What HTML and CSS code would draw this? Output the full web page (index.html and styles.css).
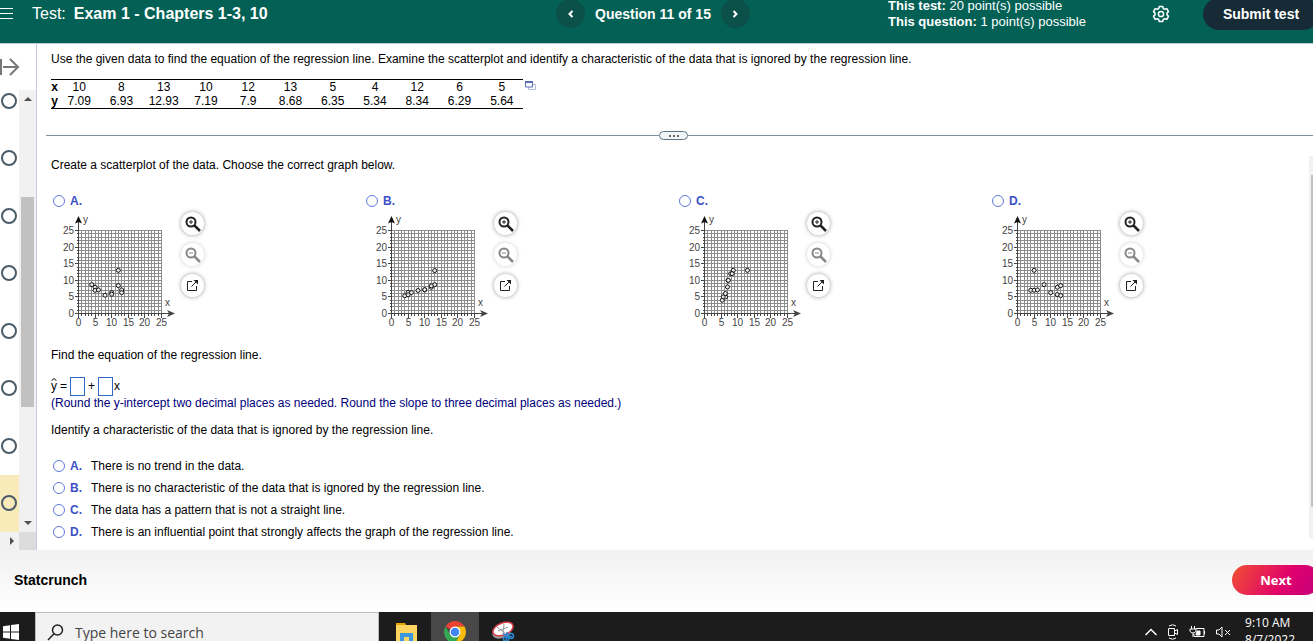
FILE: index.html
```html
<!DOCTYPE html>
<html lang="en">
  <head>
    <meta charset="UTF-8" />
    <meta name="viewport" content="width=device-width, initial-scale=1.0" />
    <title>Exam 1 - Chapters 1-3, 10</title>
    <link rel="stylesheet" href="styles.css">
  </head>

  <body>
    <header class="topbar">
      <div class="test-title">
        <button class="menu" aria-label="Menu"><span></span><span></span><span></span></button>
        <span>Test:</span>
        <b>Exam 1 - Chapters 1-3, 10</b>
      </div>
      <div class="question-nav">
        <button class="round" aria-label="Previous question">
          <svg width="6" height="8" viewBox="0 0 6 8"><path d="M4.5 1 L1.5 4 L4.5 7" /></svg>
        </button>
        <b>Question 11 of 15</b>
        <button class="round" aria-label="Next question">
          <svg width="6" height="8" viewBox="0 0 6 8"><path d="M1.5 1 L4.5 4 L1.5 7" /></svg>
        </button>
      </div>
      <div class="points">
        <div><b>This test:</b> 20 point(s) possible</div>
        <div><b>This question:</b> 1 point(s) possible</div>
      </div>
      <div class="actions">
        <button class="gear" aria-label="Settings">
          <svg width="18" height="18" viewBox="0 0 18 18">
            <path d="M7.3 1.5h3.4l.6 2 1.4.8 2.1-.7 1.7 3-1.5 1.5v1.8l1.5 1.5-1.7 3-2.1-.7-1.4.8-.6 2H7.3l-.6-2-1.4-.8-2.1.7-1.7-3L3 9.900V8.100L1.500 6.600l1.700-3 2.100.7 1.400-.8z" />
            <circle cx="9" cy="9" r="2.600" />
          </svg>
        </button>
        <button class="submit">Submit test</button>
      </div>
    </header>

    <div class="main">
      <aside class="sidebar">
        <button class="expand" aria-label="Expand question list">
          <svg width="20" height="20" viewBox="0 0 20 20"><path d="M1 2V18M3 10H18M10 2L18 10L10 18" /></svg>
        </button>
        <div class="side-scroll">
          <nav class="question-list">
            <div class="questions">
              <a href="#q4" aria-label="Question 4"></a>
              <a href="#q5" aria-label="Question 5"></a>
              <a href="#q6" aria-label="Question 6"></a>
              <a href="#q7" aria-label="Question 7"></a>
              <a href="#q8" aria-label="Question 8"></a>
              <a href="#q9" aria-label="Question 9"></a>
              <a href="#q10" aria-label="Question 10"></a>
              <a href="#q11" aria-label="Question 11" class="current"></a>
            </div>
          </nav>
          <div class="vbar">
            <i class="up"></i>
            <div class="thumb"></div>
            <i class="down"></i>
          </div>
        </div>
        <div class="hbar"><i class="right"></i><div class="corner"></div></div>
      </aside>

      <main class="content">
        <p>Use the given data to find the equation of the regression line. Examine the scatterplot and identify a characteristic of the data that is ignored by the regression line.</p>
        <div class="data">
          <table>
            <tr><th scope="row">x</th><td>10</td><td>8</td><td>13</td><td>10</td><td>12</td><td>13</td><td>5</td><td>4</td><td>12</td><td>6</td><td>5</td></tr>
            <tr><th scope="row">y</th><td>7.09</td><td>6.93</td><td>12.93</td><td>7.19</td><td>7.9</td><td>8.68</td><td>6.35</td><td>5.34</td><td>8.34</td><td>6.29</td><td>5.64</td></tr>
          </table>
          <button class="copy" aria-label="Open data">
            <svg width="11" height="10" viewBox="0 0 11 10">
              <path d="M3.500 3.500h7v5h-7z" fill="#fff" stroke="#b4bce0" />
              <path d="M.5 1h7v5h-7z" fill="#fff" stroke="#5b6bb5" />
              <path d="M0 1h8" stroke="#5b6bb5" stroke-width="2" />
            </svg>
          </button>
        </div>

        <div class="divider"><button aria-label="Resize"><span></span><span></span><span></span></button></div>

        <div class="answer">
          <p>Create a scatterplot of the data. Choose the correct graph below.</p>
          <div class="graphs" id="graphs"></div>

          <p>Find the equation of the regression line.</p>
          <div class="equation">
            <span class="hat"><svg width="6" height="3" viewBox="0 0 6 3"><path d="M.5 2.800L3 .5L5.500 2.800" /></svg>y</span>
            <span>=</span>
            <input type="text" aria-label="Intercept">
            <span>+</span>
            <input type="text" aria-label="Slope"><span>x</span>
          </div>
          <p class="hint">(Round the y-intercept two decimal places as needed. Round the slope to three decimal places as needed.)</p>
          <p class="identify">Identify a characteristic of the data that is ignored by the regression line.</p>

          <div class="choices">
            <label><input type="radio" name="trait"><b>A.</b>There is no trend in the data.</label>
            <label><input type="radio" name="trait"><b>B.</b>There is no characteristic of the data that is ignored by the regression line.</label>
            <label><input type="radio" name="trait"><b>C.</b>The data has a pattern that is not a straight line.</label>
            <label><input type="radio" name="trait"><b>D.</b>There is an influential point that strongly affects the graph of the regression line.</label>
          </div>
        </div>
        <div class="page-scroll"><div></div></div>
      </main>
    </div>

    <footer class="footer">
      <a href="#statcrunch">Statcrunch</a>
      <button class="next">Next</button>
    </footer>

    <div class="taskbar">
      <div class="taskbar-inner">
        <button class="start" aria-label="Start">
          <svg width="16" height="16" viewBox="0 0 16 16"><path d="M0 2.200L7 1.200V7.500H0zM8 1L16 0V7.500H8zM0 8.500H7V14.800L0 13.800zM8 8.500H16V16L8 15z" fill="#fff" /></svg>
        </button>
        <label class="search">
          <svg width="17" height="17" viewBox="0 0 17 17"><circle cx="10.500" cy="6" r="5" /><path d="M7 9.800L1 16" /></svg>
          <input type="text" placeholder="Type here to search" aria-label="Search">
        </label>
        <button class="app" aria-label="File Explorer">
          <svg width="22" height="20" viewBox="0 0 22 20">
            <path d="M0 1h9l1 2H0z" fill="#e8a400" /><path d="M0 3h21v17H0z" fill="#fcd462" />
            <path d="M4 20v-9h13v9h-4v-5H8v5z" fill="#3a96dd" />
          </svg>
        </button>
        <button class="app active" aria-label="Chrome">
          <svg width="22" height="22" viewBox="0 0 22 22">
            <path d="M11 11L1.500 5.500A11 11 0 0 1 20.500 5.500H11z" fill="#ea4335" />
            <path d="M11 5.500H20.500A11 11 0 0 1 11 22L15.800 13.800z" fill="#fbbc05" />
            <path d="M1.500 5.500A11 11 0 0 0 11 22L15.800 13.800 6.200 13.800z" fill="#34a853" />
            <circle cx="11" cy="11" r="5.500" fill="#fff" /><circle cx="11" cy="11" r="4.300" fill="#4285f4" />
          </svg>
        </button>
        <button class="app" aria-label="Snipping Tool">
          <svg width="24" height="22" viewBox="0 0 24 22">
            <ellipse cx="11" cy="11" rx="10" ry="6" transform="rotate(-22 11 11)" fill="#999" />
            <ellipse cx="12" cy="8" rx="10.500" ry="6" transform="rotate(-22 12 8)" fill="#fff" stroke="#d9404a" stroke-width="1.500" />
            <path d="M6 6L15 13M13 3L12 13M7 10L17 6" stroke="#999" fill="none" />
            <path d="M12 13L21 16M16 11L15 20" stroke="#2a8ad4" stroke-width="1.500" />
            <circle cx="20" cy="15" r="2.500" stroke="#2a8ad4" fill="none" stroke-width="1.500" />
            <circle cx="15" cy="18" r="2.500" stroke="#2a8ad4" fill="none" stroke-width="1.500" />
          </svg>
        </button>
        <div class="tray">
          <svg width="12" height="8" viewBox="0 0 12 8"><path d="M.5 7L6 1.500L11.500 7" stroke-width="1.500" /></svg>
          <svg width="12" height="16" viewBox="0 0 12 16"><path d="M1.500 4.500h6v7h-6zM7.500 7L10.500 5.500v5L7.500 9M2 2Q5.500 -.5 9 2M2 14Q5.500 16.500 9 14" /></svg>
          <svg width="17" height="12" viewBox="0 0 17 12"><path d="M7 2.500h8v8H5V8M15.500 5v3M2.500 0v3M5.500 0v3M1 3h6v2Q6.500 7 4 7Q1.500 7 1 5zM4 7v4" /><path d="M8 5h3v4H7z" fill="#fff" /></svg>
          <svg width="15" height="12" viewBox="0 0 15 12"><path d="M.5 4v4H3l3 3V1L3 4zM9 4l5 5M14 4L9 9" /></svg>
          <div class="clock"><div>9:10 AM</div><div>8/7/2022</div></div>
        </div>
      </div>
    </div>

    <script>
      const graphs = document.querySelector("#graphs");

      const plots = {
        A: [[4, 8.7], [5, 7.9], [5, 7], [6, 7.1], [8, 5.5], [10, 6.3], [10, 5.8], [12, 13], [12, 8.4], [13, 7.1], [13, 6.3]],
        B: [[10, 7.09], [8, 6.93], [13, 12.93], [10, 7.19], [12, 7.9], [13, 8.68], [5, 6.35], [4, 5.34], [12, 8.34], [6, 6.29], [5, 5.64]],
        C: [[7.09, 10], [6.93, 8], [12.93, 13], [7.19, 10], [7.9, 12], [8.68, 13], [6.35, 5], [5.34, 4], [8.34, 12], [6.29, 6], [5.64, 5]],
        D: [[5, 13], [4, 7], [5, 7], [6, 7.1], [8, 8.7], [10, 6.3], [12, 7.9], [12, 5.7], [13, 8.4], [13, 5.4]],
      };

      // origin of the axes and length of one unit
      const x0 = 27.5;
      const y0 = 99.5;
      const size = 83;
      const px = (v) => x0 + Math.round((v * size) / 25);
      const py = (v) => y0 - Math.round((v * size) / 25);

      const drawPlot = (points) => {
        let grid = "";
        let ticks = "";
        let labels = "";
        let dots = "";
        for (let i = 0; i <= 25; i++) {
          let t = i % 5 == 0 ? 4 : 2;
          grid += `M${px(i)} ${y0}V${y0 - size}M${x0} ${py(i)}H${x0 + size}`;
          ticks += `M${px(i)} ${y0}v${t}M${x0} ${py(i)}h-${t}`;
          if (i % 5 == 0) {
            labels += `<text x="${px(i)}" y="112" text-anchor="middle">${i}</text>`;
            labels += `<text x="23" y="${py(i) + 3}" text-anchor="end">${i}</text>`;
          }
        }
        for (let p of points) {
          dots += `<circle cx="${x0 + (p[0] * size) / 25}" cy="${y0 - (p[1] * size) / 25}" r="2" />`;
        }
        return `<svg class="plot" width="130" height="116" viewBox="0 0 130 116">
          <path class="grid" d="${grid}" />
          <path class="axis" d="${ticks}M${x0} ${y0}V6M${x0} ${y0}H118" />
          <path d="M27.500 2L24 9.500L27.500 8L31 9.500z" fill="#111" />
          <path d="M124 99.500L116 96L118 99.500L116 103z" fill="#444" />
          ${labels}
          <text x="32" y="9">y</text><text x="114" y="92">x</text>
          <g class="dots">${dots}</g>
        </svg>`;
      };

      const lens = (sign) =>
        `<svg width="16" height="16" viewBox="0 0 16 16"><circle cx="6" cy="6" r="4.500" stroke-width="2" /><path d="M9.500 9.500L15 15" stroke-width="2.500" /><path d="${sign}" /></svg>`;

      for (let name in plots) {
        graphs.innerHTML += `<div class="graph">
          <label><input type="radio" name="graph"><b>${name}.</b></label>
          <div class="graph-body">
            ${drawPlot(plots[name])}
            <div class="tools">
              <button aria-label="Zoom in">${lens("M4 6H8M6 4V8")}</button>
              <button aria-label="Zoom out" disabled>${lens("M4 6H8")}</button>
              <button aria-label="Open graph"><svg width="13" height="13" viewBox="0 0 13 13"><path d="M6 2.500H1.500V11.500H10.500V7M5.500 7.500L10 3" /><path d="M7.500 1H12V5.500z" fill="#222" stroke="none" /></svg></button>
            </div>
          </div>
        </div>`;
      }
    </script>
  </body>
</html>
```
FILE: styles.css
```css
*,
*::before,
*::after {
  box-sizing: border-box;
}

body {
  margin: 0;
  height: 100vh;
  display: flex;
  flex-direction: column;
  overflow: hidden;
  font-family: "Liberation Sans", Arial, sans-serif;
  font-size: 12px;
  line-height: 14px;
  color: #000;
  background: #fff;
}

button {
  font-family: inherit;
  padding: 0;
  border: none;
  background: none;
  display: flex;
  align-items: center;
  justify-content: center;
  flex-shrink: 0;
}

svg {
  fill: none;
  flex-shrink: 0;
}

p {
  margin: 0;
}

/* top bar */
.topbar {
  display: grid;
  grid-template-columns: minmax(0, 556fr) minmax(0, 332fr) minmax(0, 264fr) minmax(0, 161fr);
  align-items: center;
  align-content: center;
  height: 44px;
  flex-shrink: 0;
  padding-bottom: 16px;
  overflow: hidden;
  background: #036055;
  border-bottom: 1px solid #c5cbe3;
  color: #fff;
  white-space: nowrap;
}

.test-title {
  display: flex;
  align-items: center;
  gap: 8px;
  font-size: 16px;
}

.menu {
  flex-direction: column;
  gap: 4px;
  width: 13px;
  margin-right: 11px;
}

.menu span {
  width: 13px;
  height: 1px;
  background: #fff;
}

.question-nav {
  display: flex;
  align-items: center;
  gap: 10px;
  font-size: 14px;
}

.round {
  width: 29px;
  height: 29px;
  border-radius: 50%;
  background: #0b5049;
}

.round svg {
  stroke: #fff;
  stroke-width: 2;
}

.points {
  font-size: 13px;
  line-height: 16px;
}

.actions {
  display: flex;
  align-items: center;
  gap: 33px;
}

.gear svg {
  stroke: #fff;
  stroke-width: 1.5;
  stroke-linejoin: round;
}

.submit {
  width: 116px;
  height: 32px;
  border-radius: 16px;
  background: #162b36;
  color: #fff;
  font-size: 14px;
  font-weight: bold;
}

/* question list on the left */
.main {
  display: flex;
  flex: 1;
  min-height: 0;
}

.sidebar {
  display: flex;
  flex-direction: column;
  width: 37px;
  flex-shrink: 0;
  border-right: 1px solid #c5cbe3;
}

.expand {
  height: 46px;
  width: 19px;
}

.expand svg {
  stroke: #777;
  stroke-width: 2;
}

.side-scroll {
  display: flex;
  flex: 1;
  min-height: 0;
}

.question-list {
  display: flex;
  flex-direction: column;
  justify-content: flex-end;
  width: 19px;
  overflow: hidden;
}

.questions {
  display: grid;
  grid-auto-rows: 1fr;
  height: 460px;
  flex-shrink: 0;
}

.questions a {
  display: flex;
  align-items: center;
  padding-left: 1px;
}

.questions a::before {
  content: "";
  width: 16px;
  height: 16px;
  border: 2px solid #4b5c69;
  border-radius: 50%;
  background: #fff;
}

.questions .current {
  background: #f9ebb9;
}

.questions .current::before {
  background: none;
}

.vbar {
  display: grid;
  grid-template-rows: 107fr 210fr 125fr;
  width: 17px;
  background: #f1f1f1;
  justify-items: center;
}

.thumb {
  width: 13px;
  background: #c1c1c1;
}

.up,
.down {
  width: 0;
  height: 0;
  border: 4px solid transparent;
}

.up {
  margin-top: 3px;
  border-bottom-color: #505050;
}

.down {
  align-self: end;
  margin-bottom: 3px;
  border-top-color: #505050;
}

.hbar {
  display: flex;
  align-items: center;
  justify-content: space-between;
  height: 18px;
  background: #f1f1f1;
}

.right {
  margin-left: 10px;
  border: 4px solid transparent;
  border-left-color: #505050;
  border-right: none;
}

.corner {
  width: 17px;
  height: 18px;
  background: #dcdcdc;
}

/* question */
.content {
  position: relative;
  flex: 1;
  min-width: 0;
  padding: 8px 10px 0 14px;
}

.data {
  display: flex;
  align-items: flex-start;
  gap: 2px;
  margin-top: 13px;
}

.copy {
  margin-top: 2px;
}

table {
  width: 472px;
  table-layout: fixed;
  border-collapse: collapse;
  border-top: 1px solid #000;
  border-bottom: 1px solid #000;
}

th,
td {
  padding: 0;
  text-align: center;
}

th {
  width: 7px;
}

.divider {
  display: flex;
  align-items: center;
  margin: 22px -10px 18px -5px;
}

.divider::before,
.divider::after {
  content: "";
  height: 1px;
  background: #7d92a0;
}

.divider::before {
  flex: 613;
}

.divider::after {
  flex: 625;
}

.divider button {
  gap: 2px;
  width: 29px;
  height: 9px;
  border: 1px solid #5f7482;
  border-radius: 5px;
  background: #f3f6f8;
}

.divider span {
  width: 2px;
  height: 2px;
  background: #666;
}

input[type="radio"] {
  appearance: none;
  width: 12px;
  height: 12px;
  margin: 0 5px 0 2px;
  border: 1px solid #6078dc;
  border-radius: 50%;
}

label {
  display: flex;
  align-items: center;
}

label b {
  color: #3c50c8;
}

.graphs {
  display: grid;
  grid-template-columns: repeat(4, 1fr);
  margin: 22px 0 18px;
}

.graph-body {
  display: flex;
  margin-top: 6px;
}

.plot text {
  font-size: 10px;
  fill: #444;
}

.grid {
  stroke: #8c8c8c;
  shape-rendering: crispEdges;
}

.axis {
  stroke: #444;
  shape-rendering: crispEdges;
}

.dots circle {
  fill: #fff;
  fill-opacity: 0.8;
  stroke: #111;
}

.tools {
  display: flex;
  flex-direction: column;
  gap: 8px;
  margin-top: -2px;
}

.tools button {
  width: 23px;
  height: 23px;
  border-radius: 50%;
  background: #fff;
  box-shadow: 0 0 4px #999;
}

.tools svg {
  stroke: #222;
}

.tools button:disabled {
  box-shadow: 0 0 4px #ccc;
}

.tools button:disabled svg {
  stroke: #888;
}

.equation {
  display: flex;
  align-items: center;
  gap: 3px;
  height: 20px;
  margin-top: 14px;
}

.equation input {
  width: 15px;
  height: 19px;
  padding: 0;
  border: 1px solid #3068c8;
}

.equation input:last-of-type {
  margin-right: -2px;
}

.hat {
  position: relative;
}

.hat svg {
  position: absolute;
  left: 0;
  top: -1px;
  stroke: #000;
}

.hint {
  color: #00007d;
}

.identify {
  margin-top: 13px;
}

.choices {
  margin-top: 18px;
}

.choices label {
  height: 22px;
}

.choices b {
  width: 21px;
}

.page-scroll {
  position: absolute;
  top: 112px;
  right: 0;
  bottom: 12px;
  width: 4px;
  padding: 19px 0 31px 2px;
  background: #f1f1f1;
}

.page-scroll div {
  height: 100%;
  background: #c1c1c1;
}

/* footer */
.footer {
  display: flex;
  align-items: center;
  justify-content: space-between;
  height: 62px;
  flex-shrink: 0;
  padding: 0 0 2px 14px;
  overflow: hidden;
  background: linear-gradient(#f1f1f1, #fff);
}

.footer a {
  color: #000;
  font-size: 14px;
  font-weight: bold;
  text-decoration: none;
}

.next {
  width: 88px;
  height: 30px;
  margin-right: -7px;
  border-radius: 15px;
  background: linear-gradient(120deg, #f05032, #e0006c 60%, #c2007c);
  color: #fff;
  font-family: "Open Sans", sans-serif;
  font-size: 13px;
  font-weight: bold;
}

/* taskbar */
.taskbar {
  height: 29px;
  flex-shrink: 0;
  overflow: hidden;
  background: #1c1c1c;
}

.taskbar-inner {
  display: flex;
  height: 40px;
}

.start {
  width: 35px;
  padding-right: 14px;
}

.search {
  gap: 11px;
  width: 344px;
  padding-left: 11px;
  border: 1px solid #bbb;
  background: #f2f2f2;
}

.search svg {
  stroke: #222;
  stroke-width: 1.5;
}

.search input {
  flex: 1;
  border: none;
  padding: 0;
  background: none;
  font-family: "Open Sans", sans-serif;
  font-size: 14px;
}

.search input::placeholder {
  color: #444;
}

.app {
  width: 48px;
}

.search + .app {
  margin-left: 4px;
}

.app.active {
  background: #484848;
}

.tray {
  display: flex;
  align-items: center;
  gap: 10px;
  margin-left: auto;
  padding-right: 18px;
  color: #fff;
}

.tray svg {
  stroke: #fff;
}

.clock {
  margin-left: 4px;
  padding-bottom: 2px;
  font-family: "Open Sans", sans-serif;
  font-size: 12px;
  line-height: 17px;
}
```
